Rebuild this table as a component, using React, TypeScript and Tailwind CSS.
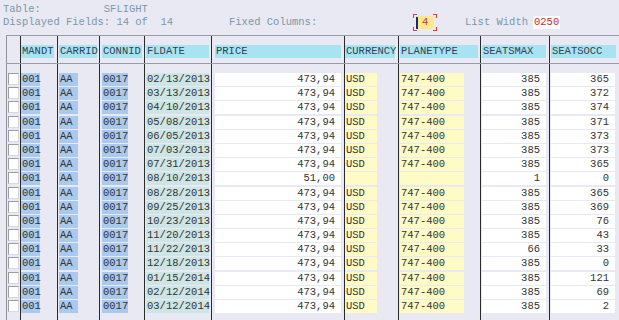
const rows: [string, string, string, string, string, string][] = [
  ["02/13/2013", "473,94", "USD", "747-400", "385", "365"],
  ["03/13/2013", "473,94", "USD", "747-400", "385", "372"],
  ["04/10/2013", "473,94", "USD", "747-400", "385", "374"],
  ["05/08/2013", "473,94", "USD", "747-400", "385", "371"],
  ["06/05/2013", "473,94", "USD", "747-400", "385", "373"],
  ["07/03/2013", "473,94", "USD", "747-400", "385", "373"],
  ["07/31/2013", "473,94", "USD", "747-400", "385", "365"],
  ["08/10/2013", "51,00", "", "", "1", "0"],
  ["08/28/2013", "473,94", "USD", "747-400", "385", "365"],
  ["09/25/2013", "473,94", "USD", "747-400", "385", "369"],
  ["10/23/2013", "473,94", "USD", "747-400", "385", "76"],
  ["11/20/2013", "473,94", "USD", "747-400", "385", "43"],
  ["11/22/2013", "473,94", "USD", "747-400", "66", "33"],
  ["12/18/2013", "473,94", "USD", "747-400", "385", "0"],
  ["01/15/2014", "473,94", "USD", "747-400", "385", "121"],
  ["02/12/2014", "473,94", "USD", "747-400", "385", "69"],
  ["03/12/2014", "473,94", "USD", "747-400", "385", "2"],
];

const cols = [
  { label: "MANDT", w: "w-[37px]", ml: "ml-0", hw: "w-[33px]", dw: "w-[19px]", bg: "bg-[#a9c9ee]", right: false },
  { label: "CARRID", w: "w-[42px]", ml: "ml-[1px]", hw: "w-[38px]", dw: "w-[19px]", bg: "bg-[#a9c9ee]", right: false },
  { label: "CONNID", w: "w-[45px]", ml: "ml-[2px]", hw: "w-[40px]", dw: "w-[26px]", bg: "bg-[#a9c9ee]", right: false },
  { label: "FLDATE", w: "w-[67px]", ml: "ml-[1px]", hw: "w-[63px]", dw: "w-[63px]", bg: "bg-[#cde5e4]", right: false },
  { label: "PRICE", w: "w-[133px]", ml: "ml-[3px]", hw: "w-[126px]", dw: "w-[126px]", bg: "bg-white", right: true },
  { label: "CURRENCY", w: "w-[54px]", ml: "ml-0", hw: "w-[50px]", dw: "w-[32px]", bg: "bg-[#fffbc4]", right: false },
  { label: "PLANETYPE", w: "w-[82px]", ml: "ml-[1px]", hw: "w-[78px]", dw: "w-[64px]", bg: "bg-[#fffbc4]", right: false },
  { label: "SEATSMAX", w: "w-[69px]", ml: "ml-[1px]", hw: "w-[64px]", dw: "w-[64px]", bg: "bg-white", right: true },
  { label: "SEATSOCC", w: "flex-1", ml: "ml-[1px]", hw: "w-[65px]", dw: "w-[64px]", bg: "bg-white", right: true },
];

export default function App() {
  return (
    <div className="w-[619px] h-[320px] overflow-hidden bg-[#e9e9f3] font-['Liberation_Mono',monospace] text-[10.5px] leading-[13px]">
      <div className="pt-[3px] pl-[3px] text-[#7c97aa] whitespace-pre">
        <div className="h-[13px]">Table:          SFLIGHT</div>
        <div className="flex items-center h-[13px]">
          <span className="w-[226px]">Displayed Fields: 14 of  14</span>
          <span className="w-[184px]">Fixed Columns:</span>
          <div className="relative -my-[2px] w-[24px] h-[17px] flex items-center">
            <span className="absolute left-0 top-0 w-[4px] h-[4px] border-l border-t border-[#e23a3a]" />
            <span className="absolute right-0 top-0 w-[4px] h-[4px] border-r border-t border-[#e23a3a]" />
            <span className="absolute left-0 bottom-0 w-[4px] h-[4px] border-l border-b border-[#e23a3a]" />
            <span className="absolute right-0 bottom-0 w-[4px] h-[4px] border-r border-b border-[#e23a3a]" />
            <div className="ml-[3px] w-[18px] h-[13px] bg-[#ffe98f] flex items-center">
              <span className="w-[2px] h-[12px] bg-[#1c2a6b]" />
              <span className="ml-[4px] text-[#d62a2a]">4</span>
            </div>
          </div>
          <span className="ml-[28px]">List Width</span>
          <span className="ml-[5px] bg-white px-[1px] text-[#d42424]">0250</span>
        </div>
      </div>

      <div className="mt-[6px] ml-[6px] text-[#333]">
        <div className="flex h-[29px] border-t border-b border-[#9a9aa8]">
          <div className="w-[14px] shrink-0 border-l border-[#8f8f99]" />
          {cols.map((c) => (
            <div key={c.label} className={`shrink-0 border-l border-[#2b2b2b] pt-[9px] ${c.w}`}>
              <div className={`${c.ml} ${c.hw} h-[13px] bg-[#a8e3f2] pl-[1px] text-[#2e4452]`}>{c.label}</div>
            </div>
          ))}
        </div>
        <div className="flex h-[9px]">
          <div className="w-[14px] shrink-0 border-l border-[#8f8f99]" />
          {cols.map((c) => (
            <div key={c.label} className={`shrink-0 border-l border-[#2b2b2b] ${c.w}`} />
          ))}
        </div>
        {rows.map((r, i) => {
          const vals = ["001", "AA", "0017", ...r];
          return (
            <div key={i} className="flex h-[14.2px]">
              <div className="w-[14px] shrink-0 border-l border-[#8f8f99] pl-[1px]">
                <div className="w-[11px] h-[12px] bg-white border border-[#9c9ca6] border-r-[#d8d8e0] border-b-[#d8d8e0]" />
              </div>
              {cols.map((c, j) => (
                <div key={c.label} className={`shrink-0 border-l border-[#2b2b2b] ${c.w}`}>
                  <div
                    className={`${c.ml} ${c.dw} h-[13px] ${j === 5 || j === 6 ? "bg-[#fffbc4]" : c.bg} ${
                      c.right ? "text-right pr-[6px]" : "pl-[1px]"
                    }`}
                  >
                    {vals[j]}
                  </div>
                </div>
              ))}
            </div>
          );
        })}
        <div className="flex h-[10px]">
          <div className="w-[14px] shrink-0 border-l border-[#8f8f99]" />
          {cols.map((c) => (
            <div key={c.label} className={`shrink-0 border-l border-[#2b2b2b] ${c.w}`} />
          ))}
        </div>
      </div>
    </div>
  );
}
